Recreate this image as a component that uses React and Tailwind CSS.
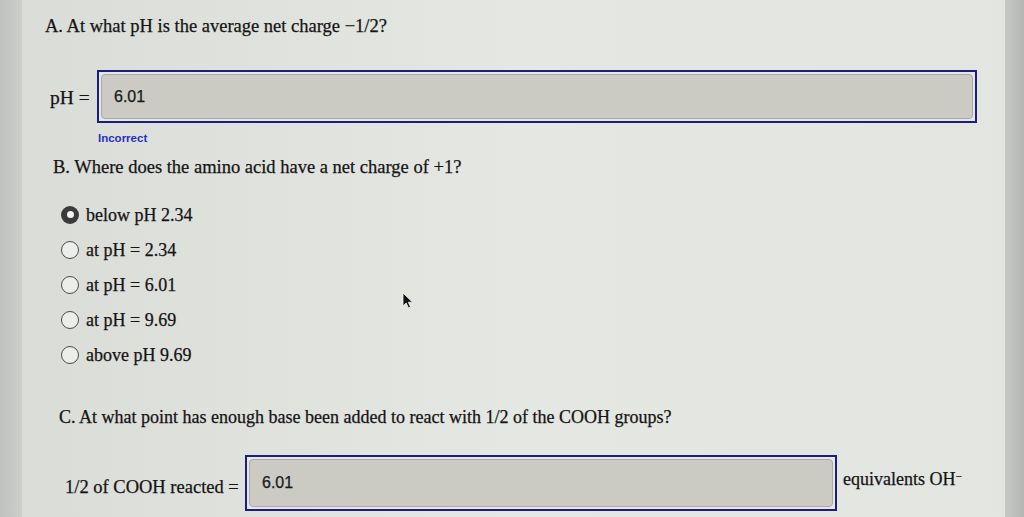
const OPTIONS = [
  { label: 'below pH 2.34', selected: true },
  { label: 'at pH = 2.34' },
  { label: 'at pH = 6.01' },
  { label: 'at pH = 9.69' },
  { label: 'above pH 9.69' },
]

function AnswerBox({ value, width, height }) {
  return (
    <div className={`border-2 border-[#1f1c7c] bg-[#e4e6ec] p-[2px] ${width} ${height}`}>
      <div className="h-full rounded-[4px] border border-[#a9aaa4] bg-[#cbcbc4] flex items-center pl-[12px] font-['Liberation_Sans',sans-serif] text-[16px] text-[#1a1a1a]">
        {value}
      </div>
    </div>
  )
}

function Radio({ selected }) {
  if (selected) {
    return (
      <span className="w-[18px] h-[18px] rounded-full bg-[#3b3b3b] flex items-center justify-center">
        <span className="w-[7px] h-[7px] rounded-full bg-[#f2f2f2]" />
      </span>
    )
  }
  return <span className="w-[18px] h-[18px] rounded-full border-[1.5px] border-[#4a4a4a] bg-[#eceeec]" />
}

export default function App() {
  return (
    <div className="relative w-[1024px] h-[517px] overflow-hidden flex bg-linear-to-r from-[#dadcd8] via-[#e5e7e3] to-[#e3e5e1] text-[#141414] font-['Liberation_Serif',serif] [-webkit-text-stroke:0.25px_#141414]">
      <div className="w-[22px] shrink-0 bg-linear-to-r from-[#bfc1be] to-[#cdcfcb]" />

      <div className="flex-1 pt-[14px] text-[18.5px]">
        <h2 className="ml-[23px] leading-[24px]">A. At what pH is the average net charge −1/2?</h2>

        <div className="mt-[32px] flex items-center">
          <span className="ml-[28px] w-[47px] leading-[24px] pt-[3px] text-[19.5px]">pH =</span>
          <AnswerBox value="6.01" width="w-[880px]" height="h-[53px]" />
        </div>

        <div className="mt-[8px] ml-[76px] leading-[14px] font-['Liberation_Sans',sans-serif] font-bold text-[11.5px] text-[#2a2fc4] [-webkit-text-stroke:0px]">
          Incorrect
        </div>

        <h2 className="mt-[10px] ml-[31px] leading-[24px]">B. Where does the amino acid have a net charge of +1?</h2>

        <div className="mt-[18px] ml-[39px] flex flex-col">
          {OPTIONS.map(o => (
            <div key={o.label} className="h-[35px] flex items-center gap-[7px]">
              <Radio selected={o.selected} />
              <span className="text-[18px] leading-[24px]">{o.label}</span>
            </div>
          ))}
        </div>

        <h2 className="mt-[33px] ml-[37px] leading-[24px] text-[18px]">
          C. At what point has enough base been added to react with 1/2 of the COOH groups?
        </h2>

        <div className="mt-[26px] flex items-center">
          <span className="ml-[43px] w-[180px] leading-[24px] pt-[8px]">1/2 of COOH reacted =</span>
          <AnswerBox value="6.01" width="w-[592px]" height="h-[56px]" />
          <span className="self-start mt-[12px] ml-[6px] leading-[24px] text-[18px]">
            equivalents OH<sup className="text-[11px]">−</sup>
          </span>
        </div>
      </div>

      <div className="w-[19px] shrink-0 bg-linear-to-r from-[#c6c8c5] to-[#b4b6b3]" />

      <svg className="absolute left-[402px] top-[292px]" width="12" height="17" viewBox="0 0 12 17">
        <path d="M1 1 L1 14 L4.2 11 L6.5 16 L8.5 15 L6.3 10.2 L10.5 10.2 Z" fill="#111" stroke="#f4f4f4" strokeWidth="0.8" />
      </svg>
    </div>
  )
}
